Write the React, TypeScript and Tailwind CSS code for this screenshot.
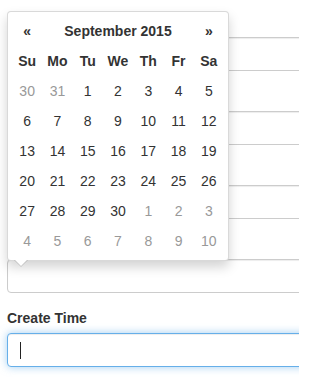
import React from "react";

const FONT = { fontFamily: '"Liberation Sans", Arial, Helvetica, sans-serif' };

type Day = { d: number; muted?: boolean };

const weeks: Day[][] = [
  [{ d: 30, muted: true }, { d: 31, muted: true }, { d: 1 }, { d: 2 }, { d: 3 }, { d: 4 }, { d: 5 }],
  [{ d: 6 }, { d: 7 }, { d: 8 }, { d: 9 }, { d: 10 }, { d: 11 }, { d: 12 }],
  [{ d: 13 }, { d: 14 }, { d: 15 }, { d: 16 }, { d: 17 }, { d: 18 }, { d: 19 }],
  [{ d: 20 }, { d: 21 }, { d: 22 }, { d: 23 }, { d: 24 }, { d: 25 }, { d: 26 }],
  [{ d: 27 }, { d: 28 }, { d: 29 }, { d: 30 }, { d: 1, muted: true }, { d: 2, muted: true }, { d: 3, muted: true }],
  [4, 5, 6, 7, 8, 9, 10].map((d) => ({ d, muted: true })),
];

const dow = ["Su", "Mo", "Tu", "We", "Th", "Fr", "Sa"];

// labels of the upper fields sit under the open picker, so they stay empty here
function FormGroup({ label, focused }: { label?: string; focused?: boolean }) {
  return (
    <div className="mb-[15px]">
      <label className="block h-5 mb-[5px] text-[14px] leading-5 font-bold text-[#333]">{label}</label>
      {focused ? (
        <div className="flex items-center h-[34px] w-[330px] px-3 bg-white border border-[#66afe9] rounded-[4px] shadow-[inset_0_1px_1px_rgba(0,0,0,0.075),0_0_8px_rgba(102,175,233,0.6)]">
          <span className="block w-px h-[17px] bg-[#222]" />
        </div>
      ) : (
        <div className="h-[34px] w-[330px] bg-white border border-[#ccc] rounded-[4px] shadow-[inset_0_1px_1px_rgba(0,0,0,0.075)]" />
      )}
    </div>
  );
}

function Datepicker() {
  return (
    <div className="absolute left-[7px] top-[11px] w-[222px] p-1 bg-white border border-[rgba(0,0,0,0.15)] rounded-[4px] shadow-[0_6px_12px_rgba(0,0,0,0.175)]">
      {/* arrow */}
      <div className="absolute left-[6px] bottom-[-7px] w-0 h-0 border-l-[7px] border-r-[7px] border-t-[7px] border-l-transparent border-r-transparent border-t-[rgba(0,0,0,0.15)]" />
      <div className="absolute left-[7px] bottom-[-6px] w-0 h-0 border-l-[6px] border-r-[6px] border-t-[6px] border-l-transparent border-r-transparent border-t-white" />

      <div className="grid grid-cols-7 w-[212px] text-[14px] text-[#333]">
        <div className="h-[30px] flex items-center justify-center font-bold">«</div>
        <div className="col-span-5 h-[30px] flex items-center justify-center font-bold">September 2015</div>
        <div className="h-[30px] flex items-center justify-center font-bold">»</div>

        {dow.map((d) => (
          <div key={d} className="h-[30px] flex items-center justify-center font-bold">
            {d}
          </div>
        ))}

        {weeks.flat().map((day, i) => (
          <div
            key={i}
            className={`h-[30px] flex items-center justify-center ${day.muted ? "text-[#999]" : "text-[#333]"}`}
          >
            {day.d}
          </div>
        ))}
      </div>
    </div>
  );
}

export default function App() {
  return (
    <div className="relative w-[299px] h-[379px] overflow-hidden bg-white" style={FONT}>
      <div className="pl-[7px] pt-[12px]">
        <FormGroup />
        <FormGroup />
        <FormGroup />
        <FormGroup />
        <FormGroup label="Create Time" focused />
      </div>
      <Datepicker />
    </div>
  );
}
